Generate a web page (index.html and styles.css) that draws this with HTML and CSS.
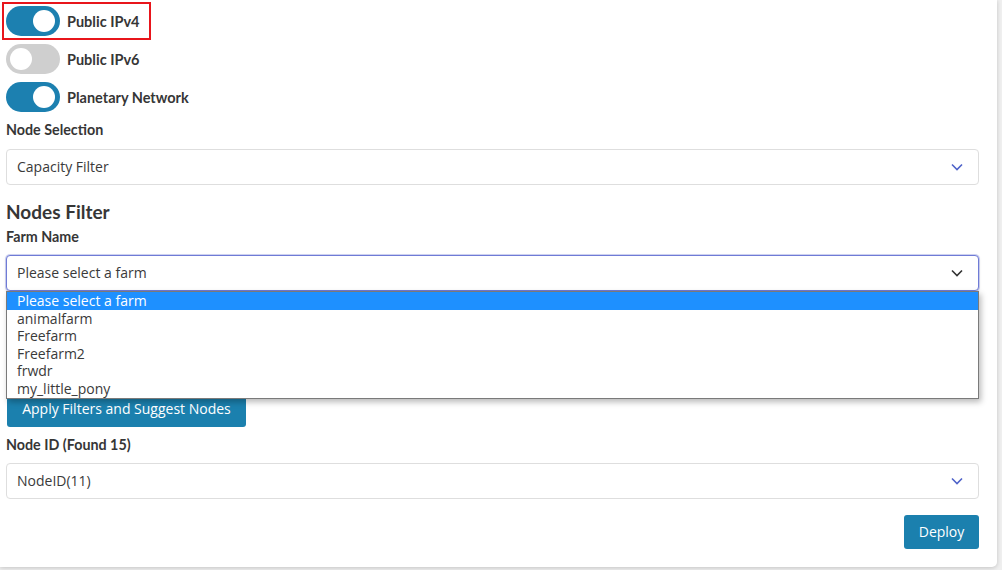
FILE: index.html
```html
<!DOCTYPE html>
<html>
<head>
<meta charset="utf-8">
<link rel="stylesheet" href="styles.css">
</head>
<body>
<div class="card">
  <div class="toggles">
    <div class="toggle-row highlighted">
      <span class="switch on"><span class="knob"></span></span>
      <span class="toggle-label">Public IPv4</span>
    </div>
    <div class="toggle-row">
      <span class="switch"><span class="knob"></span></span>
      <span class="toggle-label">Public IPv6</span>
    </div>
    <div class="toggle-row">
      <span class="switch on"><span class="knob"></span></span>
      <span class="toggle-label">Planetary Network</span>
    </div>
  </div>

  <div class="field-label first">Node Selection</div>
  <div class="select">
    <span>Capacity Filter</span>
    <svg class="chev" width="12" height="8" viewBox="0 0 12 8"><path d="M1 1.5 L6 6.5 L11 1.5" fill="none" stroke="#4f63c9" stroke-width="1.6"/></svg>
  </div>

  <h2 class="section-title">Nodes Filter</h2>
  <div class="field-label">Farm Name</div>
  <div class="select-wrap">
    <div class="select focused">
      <span>Please select a farm</span>
      <svg class="chev" width="12" height="8" viewBox="0 0 12 8"><path d="M1 1.5 L6 6.5 L11 1.5" fill="none" stroke="#333" stroke-width="1.6"/></svg>
    </div>
    <ul class="options">
      <li class="active">Please select a farm</li>
      <li>animalfarm</li>
      <li>Freefarm</li>
      <li>Freefarm2</li>
      <li>frwdr</li>
      <li>my_little_pony</li>
    </ul>
  </div>

  <button class="btn apply">Apply Filters and Suggest Nodes</button>

  <div class="field-label">Node ID (Found 15)</div>
  <div class="select">
    <span>NodeID(11)</span>
    <svg class="chev" width="12" height="8" viewBox="0 0 12 8"><path d="M1 1.5 L6 6.5 L11 1.5" fill="none" stroke="#4f63c9" stroke-width="1.6"/></svg>
  </div>

  <div class="actions">
    <button class="btn deploy">Deploy</button>
  </div>
</div>
</body>
</html>
```
FILE: styles.css
```css
html, body {
  margin: 0;
  padding: 0;
}
body {
  background: #efefef;
  width: 1002px;
  height: 570px;
  overflow: hidden;
}
.card {
  box-sizing: border-box;
  width: 997px;
  height: 567px;
  background: #fff;
  border-radius: 0 0 5px 0;
  box-shadow: 0 1px 4px rgba(0, 0, 0, 0.18);
  padding: 6px 18px 0 6px;
  font-family: "Lato", "Liberation Sans", sans-serif;
  color: #363636;
}
.toggles {
  display: flex;
  flex-direction: column;
  align-items: flex-start;
}
.toggle-row {
  display: inline-flex;
  align-items: center;
  height: 30px;
  margin-bottom: 8px;
  padding-right: 7px;
}
.toggle-row.highlighted {
  outline: 2px solid #e8151b;
  outline-offset: 2px;
}
.switch {
  position: relative;
  width: 54px;
  height: 30px;
  border-radius: 15px;
  background: #cfcfcf;
  flex: none;
}
.switch.on {
  background: #1c80b0;
}
.knob {
  position: absolute;
  top: 4px;
  left: 4px;
  width: 22px;
  height: 22px;
  border-radius: 50%;
  background: #fff;
}
.switch.on .knob {
  left: 27px;
}
.toggle-label {
  margin-left: 7px;
  font-weight: 700;
  font-size: 14.5px;
  color: #363636;
}
.field-label {
  font-weight: 700;
  font-size: 14.3px;
  line-height: 20px;
  margin: 8px 0 8px;
  color: #363636;
}
.field-label.first {
  margin-top: 0px;
  margin-bottom: 9px;
}
.section-title {
  font-size: 19px;
  line-height: 24px;
  font-weight: 700;
  margin: 15px 0 -5px;
  color: #363636;
}
.select {
  box-sizing: border-box;
  height: 36px;
  border: 1px solid #dedede;
  border-radius: 4px;
  display: flex;
  align-items: center;
  justify-content: space-between;
  padding: 0 15px 2px 10px;
  font-family: "Open Sans", "Noto Sans", sans-serif;
  font-size: 14px;
  color: #3a3a3a;
  background: #fff;
}
.select.focused {
  border-color: #6f7bd6;
  box-shadow: 0 0 0 1px rgba(120, 132, 220, 0.35), 0 1px 3px rgba(0, 0, 0, 0.15);
}
.chev {
  display: block;
  margin-top: 2px;
}
.select-wrap {
  position: relative;
}
.options {
  position: absolute;
  top: 36px;
  left: 0;
  right: 0;
  margin: 0;
  padding: 0;
  list-style: none;
  background: #fff;
  border: 1px solid #7a7a7a;
  box-shadow: 2px 3px 6px rgba(0, 0, 0, 0.28);
  z-index: 5;
  font-family: "Open Sans", "Noto Sans", sans-serif;
  font-size: 14px;
  color: #3a3a3a;
}
.options li {
  height: 17.6px;
  line-height: 17.6px;
  padding-left: 10px;
}
.options li.active {
  background: #1e90ff;
  color: #fff;
}
.btn {
  border: none;
  background: #1b80ae;
  color: #fff;
  font-family: "Open Sans", "Noto Sans", sans-serif;
  font-size: 14px;
  border-radius: 3px;
  cursor: pointer;
}
.apply {
  display: block;
  margin: 100px 0 0 1px;
  width: 239px;
  height: 36px;
  padding: 0 0 2px;
}
.actions {
  display: flex;
  justify-content: flex-end;
  margin-top: 16px;
}
.deploy {
  width: 75px;
  height: 34px;
  padding: 0 0 2px;
}
```
